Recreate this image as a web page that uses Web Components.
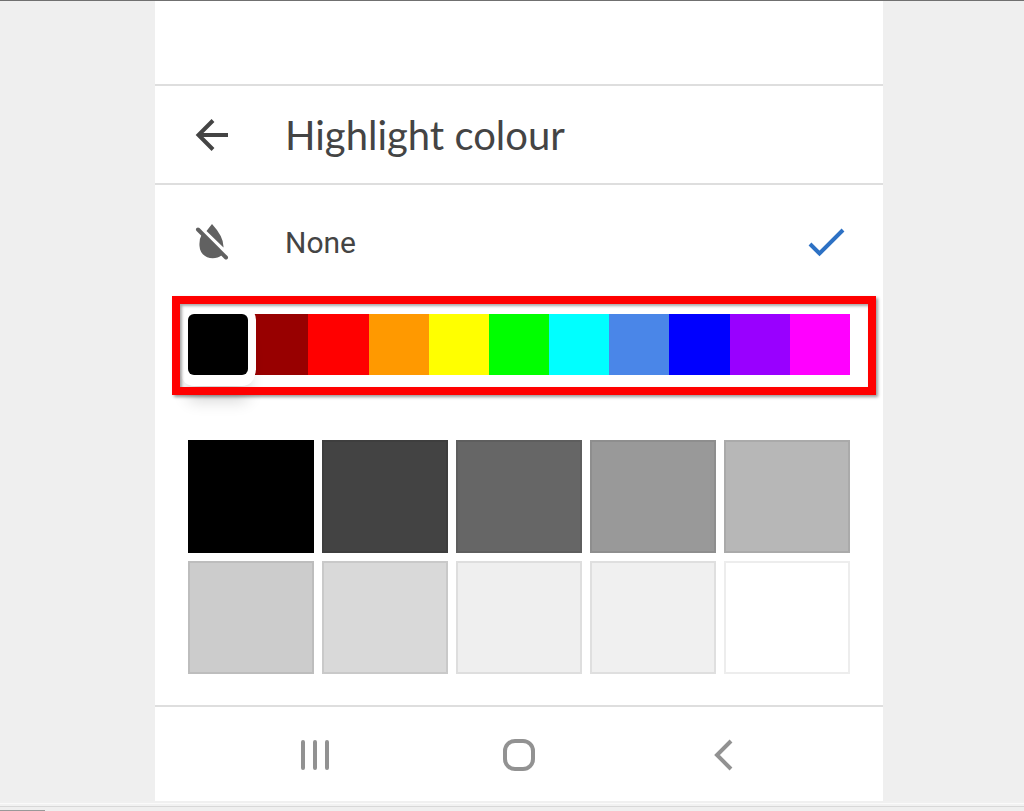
<!DOCTYPE html>
<html lang="en-GB">
<head>
<meta charset="utf-8">
<meta name="viewport" content="width=device-width, initial-scale=1">
<title>Highlight colour</title>
<style>
  html, body { margin: 0; min-height: 100%; background: #efefef; }
  body { font-family: Roboto, "Liberation Sans", sans-serif; color: #444; }
</style>
</head>
<body>
<highlight-page>
  <panel-header slot="header">Highlight colour</panel-header>
  <none-option slot="none">None</none-option>
  <colour-strip slot="strip"></colour-strip>
  <shade-grid slot="shades"></shade-grid>
  <phone-nav slot="nav"></phone-nav>
</highlight-page>
<script>
class BaseElement extends HTMLElement {
  connectedCallback() {
    if (this.shadowRoot) return;
    this.attachShadow({ mode: 'open' }).innerHTML = this.render();
  }
}

customElements.define('highlight-page', class extends BaseElement {
  render() {
    return `<style>
      :host { display: flex; flex-direction: column; min-height: 100vh; border-top: 1px solid #707070; box-sizing: border-box; }
      .stage { flex: 1; display: grid; grid-template-columns: 155fr 728fr 141fr; }
      main { grid-column: 2; display: flex; flex-direction: column; background: #fff; min-width: 0; }
      .page-end { height: 83px; border-bottom: 2px solid #dedede; }
      ::slotted([slot=nav]) { flex: 1; }
      footer { height: 10px; box-sizing: border-box; border-top: 2px solid #f0f0f0; display: flex; flex-direction: column; }
      .edge { height: 4px; box-sizing: border-box; background: #f2f2f2; border-top: 1px solid #fafafa; border-bottom: 1px solid #d8d8d8; }
      .progress { flex: 1; display: flex; align-items: flex-end; }
      .progress i { width: 45px; height: 1px; background: #999; }
    </style>
    <div class="stage"><main>
      <div class="page-end"></div>
      <slot name="header"></slot><slot name="none"></slot><slot name="strip"></slot>
      <slot name="shades"></slot><slot name="nav"></slot>
    </main></div>
    <footer><div class="edge"></div><div class="progress"><i></i></div></footer>`;
  }
});

customElements.define('panel-header', class extends BaseElement {
  render() {
    return `<style>
      :host { display: block; border-bottom: 2px solid #dedede; }
      header { height: 97px; display: flex; align-items: center; gap: 48px; padding-left: 32px; }
      button { display: flex; width: 50px; height: 50px; padding: 0; border: 0; background: none; align-items: center; justify-content: center; }
      h1 { margin: 0; font: 400 40px/48px Lato, sans-serif; color: #444; }
    </style>
    <header>
      <button type="button" aria-label="Back"><svg width="34" height="34" viewBox="0 0 34 34" fill="none" stroke="#444" stroke-width="4"><path d="M33 17H4M18 2.5 3.5 17 18 31.5"/></svg></button>
      <h1><slot></slot></h1>
    </header>`;
  }
});

customElements.define('none-option', class extends BaseElement {
  render() {
    return `<style>
      :host { display: block; }
      button { width: 100%; height: 111px; display: flex; align-items: center; gap: 56px; padding: 4px 38px 0 40px; border: 0; background: none; font: 400 30px/40px Roboto, sans-serif; color: #444; text-align: left; }
      span { flex: 1; }
      svg { flex: none; }
    </style>
    <button type="button" aria-pressed="true">
      <svg width="34" height="38" viewBox="0 0 34 38"><path d="M17 0 11.500 7 28.500 23.500Q29 13 17 0ZM7 10Q4 15 4.500 22C5 34 19 37.500 27 31Z" fill="#616161"/><path d="M3 5.500 31 33.500" stroke="#616161" stroke-width="4" stroke-linecap="round"/></svg>
      <span><slot></slot></span>
      <svg width="38" height="34" viewBox="0 0 38 34" fill="none" stroke="#2d71c4" stroke-width="4"><path d="M3 18 12.500 27.500 36 4"/></svg>
    </button>`;
  }
});

customElements.define('colour-strip', class extends BaseElement {
  render() {
    const colours = [['Black', '#000'], ['Dark red', '#980000'], ['Red', '#f00'], ['Orange', '#f90'],
      ['Yellow', '#ff0'], ['Green', '#0f0'], ['Cyan', '#0ff'], ['Cornflower blue', '#4a86e8'],
      ['Blue', '#00f'], ['Purple', '#90f'], ['Magenta', '#f0f']];
    return `<style>
      :host { display: block; position: relative; margin: 0 7px 0 17px; padding: 18px 26px 20px 16px; }
      :host::after { content: ""; position: absolute; inset: 0; border: 8px solid #f00; box-shadow: 2px 2px 3px rgba(0,0,0,.4), inset 2px 2px 3px rgba(0,0,0,.35); pointer-events: none; }
      div { display: grid; grid-template-columns: repeat(11, 1fr); height: 61px; }
      input { appearance: none; margin: 0; width: 100%; height: 100%; background: var(--colour); }
      input:checked { position: relative; border-radius: 6px; box-shadow: 0 0 0 8px #fff, 0 4px 0 7px #fff, 0 26px 16px rgba(0,0,0,.16); }
    </style>
    <div role="radiogroup" aria-label="Colour">${colours.map(([name, value], i) =>
      `<input type="radio" name="colour" aria-label="${name}" style="--colour:${value}"${i ? '' : ' checked'}>`).join('')}</div>`;
  }
});

customElements.define('shade-grid', class extends BaseElement {
  render() {
    const shades = ['#000', '#434343', '#666', '#999', '#b7b7b7', '#ccc', '#d9d9d9', '#efefef', '#f0f0f0', '#fff'];
    return `<style>
      :host { display: block; padding: 45px 33px 31px; border-bottom: 2px solid #dedede; }
      div { display: grid; grid-template-columns: repeat(5, 1fr); grid-auto-rows: 113px; gap: 8px; }
      button { border: 2px solid rgba(0,0,0,.07); padding: 0; background: var(--shade) border-box; }
    </style>
    <div role="group" aria-label="Shade">${shades.map((value, i) =>
      `<button type="button" aria-label="Shade ${i + 1}" style="--shade:${value}"></button>`).join('')}</div>`;
  }
});

customElements.define('phone-nav', class extends BaseElement {
  render() {
    return `<style>
      :host { display: block; }
      nav { height: 94px; display: grid; grid-template-columns: repeat(3, 28%); justify-content: center; align-items: center; }
      button { border: 0; padding: 2px 0 0; background: none; height: 60px; display: flex; align-items: center; justify-content: center; }
      svg { fill: none; stroke: #929292; stroke-width: 4; }
    </style>
    <nav aria-label="System">
      <button type="button" aria-label="Recent apps"><svg width="32" height="32" viewBox="0 0 32 32" stroke-linecap="round"><path d="M4 3V29M16 3V29M28 3V29"/></svg></button>
      <button type="button" aria-label="Home"><svg width="34" height="34" viewBox="0 0 34 34"><rect x="3" y="3" width="28" height="28" rx="10"/></svg></button>
      <button type="button" aria-label="Back"><svg width="20" height="32" viewBox="0 0 20 32"><path d="M18 2 4 16 18 30"/></svg></button>
    </nav>`;
  }
});
</script>
</body>
</html>
